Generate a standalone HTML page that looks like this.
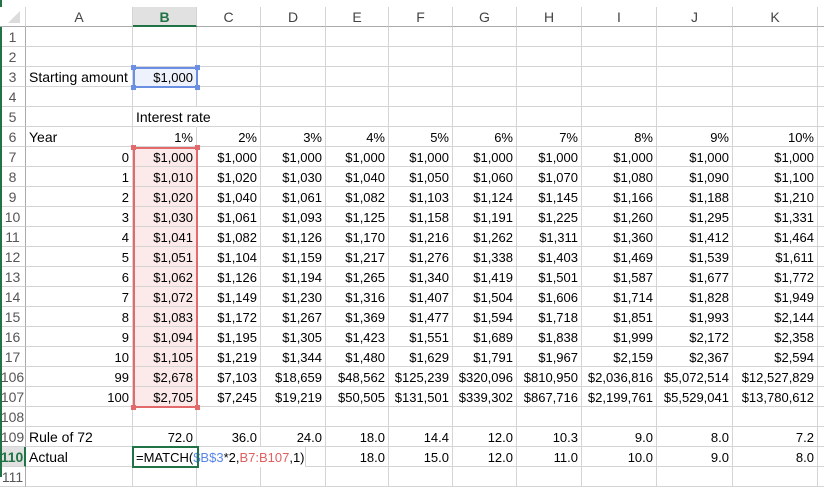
<!DOCTYPE html>
<html><head><meta charset="utf-8"><style>
body{margin:0;width:824px;height:477px;overflow:hidden;background:#fff;font-family:"Liberation Sans",Arial,sans-serif;position:relative}
.g{position:absolute;left:0;top:7px}
.row{display:grid;grid-template-columns:26px 107px 64px 64px 65px 63px 64px 64px 65px 75px 76px 85px 6px;height:20px}
.row span{box-sizing:border-box;height:20px;border-right:1px solid #d4d4d4;border-bottom:1px solid #d4d4d4;font-size:13px;line-height:21px;text-align:right;padding:0 3px;white-space:nowrap;overflow:visible}
.row span:first-child{text-align:center;color:#555;border-right-color:#ababab;padding:0;font-size:14px}
.row span.l{text-align:left;font-size:14px}
.h span{text-align:center;color:#444;border-bottom-color:#ababab;font-size:14px;line-height:20px}
.h span.sel{background:#e1e1e1;color:#217346;font-weight:bold;border-bottom:2px solid #217346}
.row span.pk{background:#fce9e9}
.ov{position:absolute;box-sizing:border-box}
.hd{position:absolute;width:5px;height:5px}
</style></head><body>
<div class="g">
<div class="row h"><span></span><span>A</span><span class="sel">B</span><span>C</span><span>D</span><span>E</span><span>F</span><span>G</span><span>H</span><span>I</span><span>J</span><span>K</span><span></span></div>
<div class="row"><span>1</span><span></span><span></span><span></span><span></span><span></span><span></span><span></span><span></span><span></span><span></span><span></span><span></span></div>
<div class="row"><span>2</span><span></span><span></span><span></span><span></span><span></span><span></span><span></span><span></span><span></span><span></span><span></span><span></span></div>
<div class="row"><span>3</span><span class="l">Starting amount</span><span style="background:#eef2fc">$1,000</span><span></span><span></span><span></span><span></span><span></span><span></span><span></span><span></span><span></span><span></span></div>
<div class="row"><span>4</span><span></span><span></span><span></span><span></span><span></span><span></span><span></span><span></span><span></span><span></span><span></span><span></span></div>
<div class="row"><span>5</span><span></span><span class="l" style="border-right-color:transparent">Interest rate</span><span></span><span></span><span></span><span></span><span></span><span></span><span></span><span></span><span></span><span></span></div>
<div class="row"><span>6</span><span class="l">Year</span><span>1%</span><span>2%</span><span>3%</span><span>4%</span><span>5%</span><span>6%</span><span>7%</span><span>8%</span><span>9%</span><span>10%</span><span></span></div>
<div class="row"><span>7</span><span>0</span><span class="pk">$1,000</span><span>$1,000</span><span>$1,000</span><span>$1,000</span><span>$1,000</span><span>$1,000</span><span>$1,000</span><span>$1,000</span><span>$1,000</span><span>$1,000</span><span></span></div>
<div class="row"><span>8</span><span>1</span><span class="pk">$1,010</span><span>$1,020</span><span>$1,030</span><span>$1,040</span><span>$1,050</span><span>$1,060</span><span>$1,070</span><span>$1,080</span><span>$1,090</span><span>$1,100</span><span></span></div>
<div class="row"><span>9</span><span>2</span><span class="pk">$1,020</span><span>$1,040</span><span>$1,061</span><span>$1,082</span><span>$1,103</span><span>$1,124</span><span>$1,145</span><span>$1,166</span><span>$1,188</span><span>$1,210</span><span></span></div>
<div class="row"><span>10</span><span>3</span><span class="pk">$1,030</span><span>$1,061</span><span>$1,093</span><span>$1,125</span><span>$1,158</span><span>$1,191</span><span>$1,225</span><span>$1,260</span><span>$1,295</span><span>$1,331</span><span></span></div>
<div class="row"><span>11</span><span>4</span><span class="pk">$1,041</span><span>$1,082</span><span>$1,126</span><span>$1,170</span><span>$1,216</span><span>$1,262</span><span>$1,311</span><span>$1,360</span><span>$1,412</span><span>$1,464</span><span></span></div>
<div class="row"><span>12</span><span>5</span><span class="pk">$1,051</span><span>$1,104</span><span>$1,159</span><span>$1,217</span><span>$1,276</span><span>$1,338</span><span>$1,403</span><span>$1,469</span><span>$1,539</span><span>$1,611</span><span></span></div>
<div class="row"><span>13</span><span>6</span><span class="pk">$1,062</span><span>$1,126</span><span>$1,194</span><span>$1,265</span><span>$1,340</span><span>$1,419</span><span>$1,501</span><span>$1,587</span><span>$1,677</span><span>$1,772</span><span></span></div>
<div class="row"><span>14</span><span>7</span><span class="pk">$1,072</span><span>$1,149</span><span>$1,230</span><span>$1,316</span><span>$1,407</span><span>$1,504</span><span>$1,606</span><span>$1,714</span><span>$1,828</span><span>$1,949</span><span></span></div>
<div class="row"><span>15</span><span>8</span><span class="pk">$1,083</span><span>$1,172</span><span>$1,267</span><span>$1,369</span><span>$1,477</span><span>$1,594</span><span>$1,718</span><span>$1,851</span><span>$1,993</span><span>$2,144</span><span></span></div>
<div class="row"><span>16</span><span>9</span><span class="pk">$1,094</span><span>$1,195</span><span>$1,305</span><span>$1,423</span><span>$1,551</span><span>$1,689</span><span>$1,838</span><span>$1,999</span><span>$2,172</span><span>$2,358</span><span></span></div>
<div class="row"><span>17</span><span>10</span><span class="pk">$1,105</span><span>$1,219</span><span>$1,344</span><span>$1,480</span><span>$1,629</span><span>$1,791</span><span>$1,967</span><span>$2,159</span><span>$2,367</span><span>$2,594</span><span></span></div>
<div class="row"><span>106</span><span>99</span><span class="pk">$2,678</span><span>$7,103</span><span>$18,659</span><span>$48,562</span><span>$125,239</span><span>$320,096</span><span>$810,950</span><span>$2,036,816</span><span>$5,072,514</span><span>$12,527,829</span><span></span></div>
<div class="row"><span>107</span><span>100</span><span class="pk">$2,705</span><span>$7,245</span><span>$19,219</span><span>$50,505</span><span>$131,501</span><span>$339,302</span><span>$867,716</span><span>$2,199,761</span><span>$5,529,041</span><span>$13,780,612</span><span></span></div>
<div class="row"><span>108</span><span></span><span></span><span></span><span></span><span></span><span></span><span></span><span></span><span></span><span></span><span></span><span></span></div>
<div class="row"><span>109</span><span class="l">Rule of 72</span><span>72.0</span><span>36.0</span><span>24.0</span><span>18.0</span><span>14.4</span><span>12.0</span><span>10.3</span><span>9.0</span><span>8.0</span><span>7.2</span><span></span></div>
<div class="row"><span style="background:#e1e1e1;color:#217346;font-weight:bold;border-right:2px solid #217346">110</span><span class="l">Actual</span><span></span><span></span><span></span><span>18.0</span><span>15.0</span><span>12.0</span><span>11.0</span><span>10.0</span><span>9.0</span><span>8.0</span><span></span></div>
<div class="row"><span>111</span><span></span><span></span><span></span><span></span><span></span><span></span><span></span><span></span><span></span><span></span><span></span><span></span></div>
</div>
<div class="ov" style="left:0;top:0;width:2px;height:477px;background:#217346"></div>
<div class="ov" style="left:0;top:7px;width:26px;height:20px;background:#fff;border-right:1px solid #d4d4d4;border-bottom:1px solid #ababab"><svg width="25" height="19" style="position:absolute;left:0;top:0"><polygon points="20,4 20,16 8,16" fill="#dcdcdc"/></svg></div>
<div class="ov" style="left:133px;top:67px;width:65px;height:21px;border:2px solid #6b8fe2"></div>
<div class="hd" style="left:131px;top:65px;background:#6b8fe2"></div><div class="hd" style="left:195px;top:65px;background:#6b8fe2"></div>
<div class="hd" style="left:131px;top:85px;background:#6b8fe2"></div><div class="hd" style="left:195px;top:85px;background:#6b8fe2"></div>
<div class="ov" style="left:133px;top:147px;width:65px;height:261px;border:2px solid #e36a6a"></div>
<div class="hd" style="left:131px;top:145px;background:#e36a6a"></div><div class="hd" style="left:195px;top:145px;background:#e36a6a"></div>
<div class="hd" style="left:131px;top:405px;background:#e36a6a"></div><div class="hd" style="left:195px;top:405px;background:#e36a6a"></div>
<div class="ov" style="left:134px;top:447px;width:172px;height:20px;background:#fff;border-right:1px solid #d4d4d4;font-size:13px;line-height:21px;padding-left:2px;white-space:nowrap;overflow:hidden">=MATCH(<span style="color:#5a86ea">$B$3</span>*2,<span style="color:#e05f5f">B7:B107</span>,1)</div>
<div class="ov" style="left:132px;top:446px;width:67px;height:22px;border:2px solid #217346"></div>
</body></html>
